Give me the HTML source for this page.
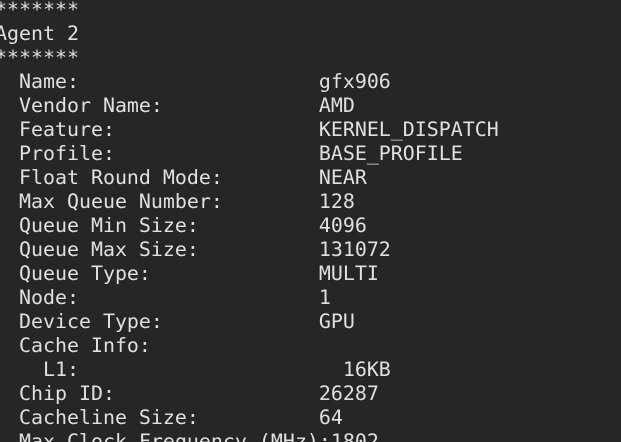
<html><head><style>
html,body{margin:0;background:#262626;width:621px;height:442px;overflow:hidden}
pre{margin:0;position:absolute;left:-5px;top:-2px;font:19.93px/24px "DejaVu Sans Mono","Liberation Mono",monospace;color:#e0e0e0}
</style></head><body><pre>*******
Agent 2
*******
  Name:                    gfx906
  Vendor Name:             AMD
  Feature:                 KERNEL_DISPATCH
  Profile:                 BASE_PROFILE
  Float Round Mode:        NEAR
  Max Queue Number:        128
  Queue Min Size:          4096
  Queue Max Size:          131072
  Queue Type:              MULTI
  Node:                    1
  Device Type:             GPU
  Cache Info:
    L1:                      16KB
  Chip ID:                 26287
  Cacheline Size:          64
  Max Clock Frequency (MHz):1802</pre></body></html>
